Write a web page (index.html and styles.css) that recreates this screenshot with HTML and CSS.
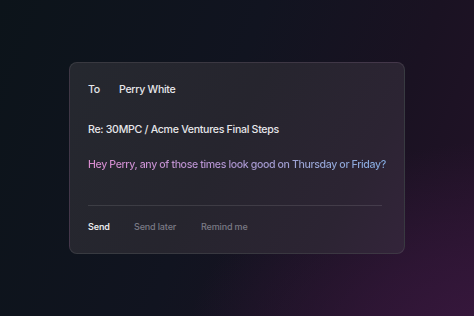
FILE: index.html
```html
<!DOCTYPE html>
<html>
<head>
<meta charset="utf-8">
<link rel="stylesheet" href="styles.css">
</head>
<body>
<div class="stage">
  <div class="card">
    <div class="row to-row"><span class="label">To</span><span class="value">Perry White</span></div>
    <div class="row subject">Re: 30MPC / Acme Ventures Final Steps</div>
    <div class="row body-text"><span class="grad">Hey Perry, any of those times look good on Thursday or Friday?</span></div>
    <div class="divider"></div>
    <div class="actions">
      <span class="act primary">Send</span>
      <span class="act">Send later</span>
      <span class="act">Remind me</span>
    </div>
  </div>
</div>
</body>
</html>
```
FILE: styles.css
```css
html, body { margin: 0; padding: 0; }
body {
  width: 474px; height: 316px; overflow: hidden;
  font-family: Inter, "Noto Sans", sans-serif;
}
.stage {
  width: 474px; height: 316px;
  box-sizing: border-box;
  padding-top: 62px; padding-left: 69px;
  background:
    radial-gradient(ellipse 420px 260px at 110% 110%, #3a1840 0%, rgba(58,24,64,0.55) 40%, rgba(30,16,36,0) 80%),
    linear-gradient(110deg, #0c141a 0%, #111420 45%, #1a1222 75%, #231228 100%);
}
.card {
  width: 336px; height: 192px;
  box-sizing: border-box;
  border-radius: 8px;
  border: 1px solid rgba(255,255,255,0.09);
  background: linear-gradient(120deg, #25282f 0%, #26252e 45%, #2c2433 80%, #33243a 100%);
  padding: 0 22px 0 18px;
  display: flex; flex-direction: column;
  color: #e6e6ea;
  font-size: 10.6px;
  font-weight: 500;
}
.row { white-space: nowrap; letter-spacing: -0.3px; }
.to-row { margin-top: 20px; height: 14px; line-height: 14px; display: flex; }
.label { width: 31px; }
.subject { margin-top: 26px; height: 14px; line-height: 14px; }
.body-text { margin-top: 21px; height: 14px; line-height: 14px; letter-spacing: -0.38px; }
.grad {
  background: linear-gradient(90deg, #d98ccf 0%, #b496d4 45%, #9aa6d6 75%, #84abe0 100%);
  -webkit-background-clip: text; background-clip: text;
  color: transparent;
}
.divider {
  margin-top: 33px;
  height: 1px;
  background: rgba(255,255,255,0.11);
}
.actions { margin-top: 15px; display: flex; font-size: 9px; line-height: 12px; letter-spacing: -0.15px; }
.act { color: #7b7b86; font-weight: 500; }
.act.primary { color: #e8e8ec; font-weight: 600; width: 46px; }
.act:nth-child(2) { width: 67px; }
```
